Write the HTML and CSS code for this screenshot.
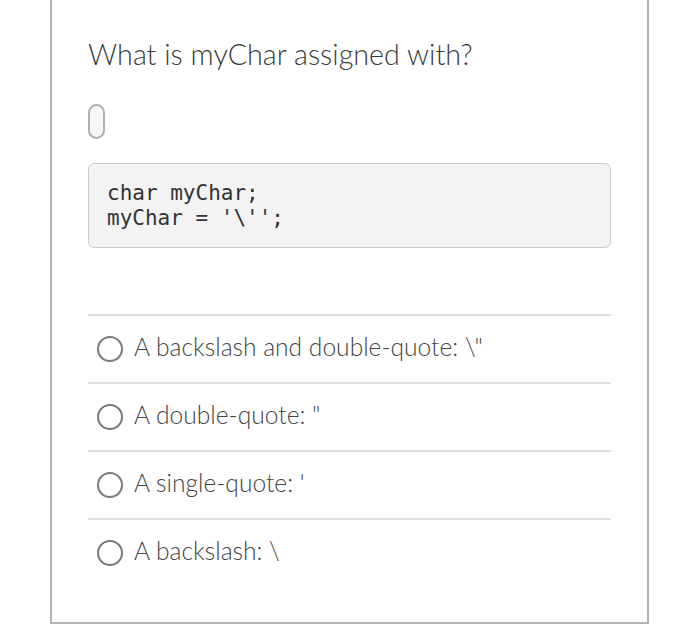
FILE: index.html
```html
<!DOCTYPE html>
<html>
<head>
<meta charset="utf-8">
<link rel="stylesheet" href="styles.css">
</head>
<body>
<div class="card">
  <h1 class="title">What is myChar assigned with?</h1>
  <div class="pill"></div>
  <pre class="code">char myChar;
myChar = '\'';</pre>
  <div class="options">
    <label class="option"><span class="radio"></span><span class="label">A backslash and double-quote: \"</span></label>
    <label class="option"><span class="radio"></span><span class="label">A double-quote: "</span></label>
    <label class="option"><span class="radio"></span><span class="label">A single-quote: '</span></label>
    <label class="option"><span class="radio"></span><span class="label">A backslash: \</span></label>
  </div>
</div>
</body>
</html>
```
FILE: styles.css
```css
html, body {
  margin: 0;
  padding: 0;
  background: #ffffff;
}
body {
  font-family: Lato, "Liberation Sans", sans-serif;
  color: #3c3c3c;
}
.card {
  box-sizing: border-box;
  margin-left: 50px;
  width: 599px;
  border: 2px solid #b4b4b4;
  border-top: none;
  padding: 38px 36px 36px 36px;
}
.title {
  margin: 0;
  font-size: 28.7px;
  font-weight: 300;
  line-height: 33px;
  color: #3a3a3a;
}
.pill {
  box-sizing: border-box;
  margin-top: 33px;
  width: 17px;
  height: 35px;
  border: 2px solid #b0b0b0;
  border-radius: 9px;
  background: #f6f6f6;
}
.code {
  margin: 24px 0 0 0;
  padding: 17px 18px 16px 18px;
  border: 1px solid #cccccc;
  border-radius: 6px;
  background: #f3f3f4;
  font-family: "DejaVu Sans Mono", monospace;
  font-size: 21px;
  line-height: 25px;
  color: #333333;
}
.options {
  margin-top: 66px;
}
.option {
  display: flex;
  align-items: center;
  height: 66px;
  border-top: 2px solid #e0e0e0;
  padding-left: 9px;
}
.radio {
  box-sizing: border-box;
  width: 26px;
  height: 26px;
  border: 2px solid #7a7a7a;
  border-radius: 50%;
  flex: none;
}
.label {
  margin-left: 11px;
  font-size: 24.6px;
  font-weight: 300;
  line-height: 28px;
  padding-bottom: 4px;
  color: #444444;
}
```
